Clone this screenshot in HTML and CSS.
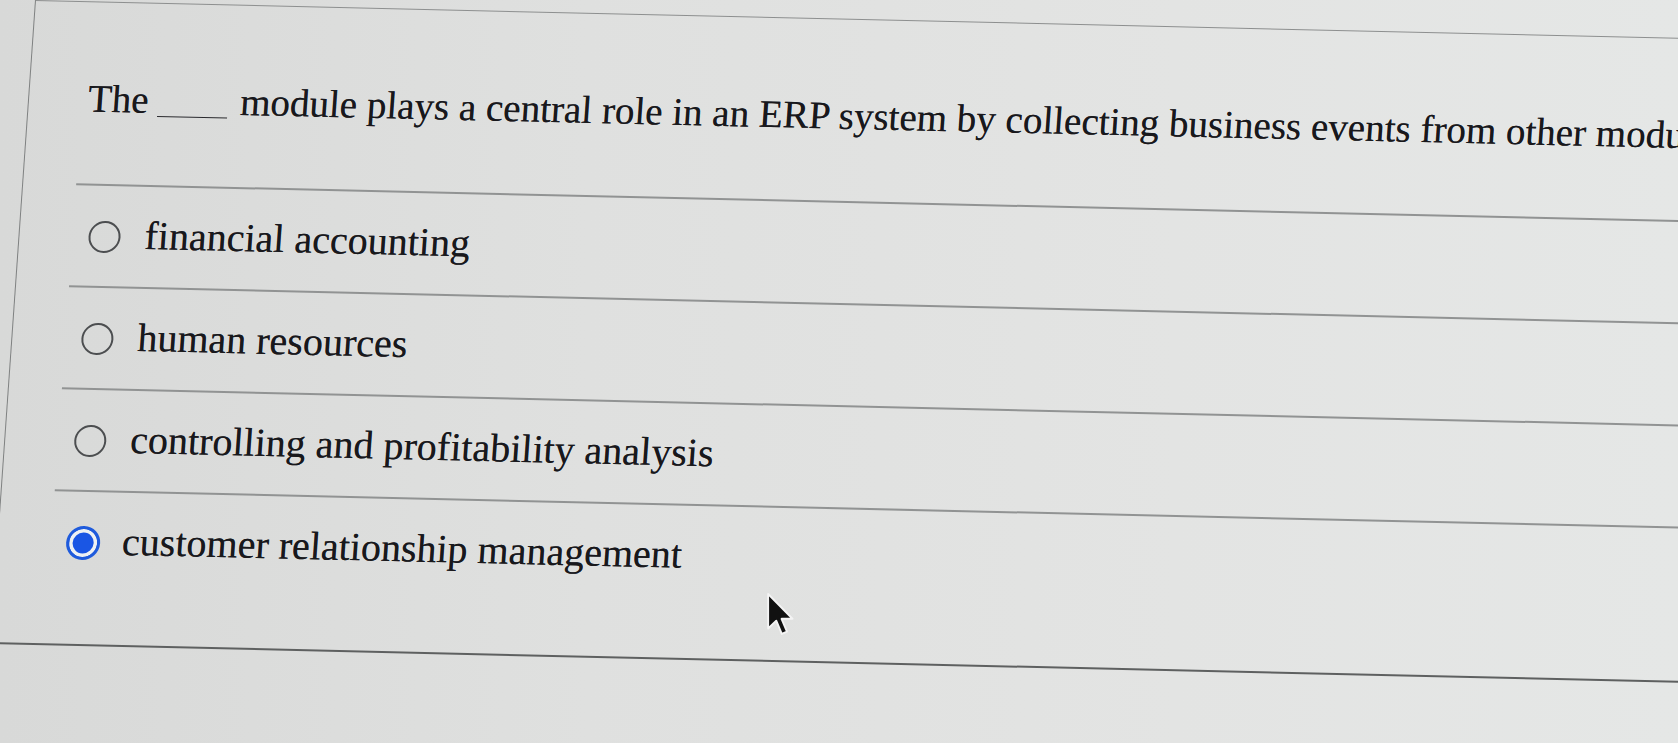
FILE: index.html
```html
<!DOCTYPE html>
<html lang="en">
<head>
<meta charset="utf-8">
<title>ERP quiz question</title>
<link rel="stylesheet" href="styles.css">
</head>
<body>
<div class="frame">
  <div class="question">The <span class="blank"></span> module plays a central role in an ERP system by collecting business events from other modules.</div>
  <ul class="options">
    <li class="option"><span class="radio"></span><span class="label">financial accounting</span></li>
    <li class="option"><span class="radio"></span><span class="label">human resources</span></li>
    <li class="option"><span class="radio"></span><span class="label">controlling and profitability analysis</span></li>
    <li class="option"><span class="radio checked"></span><span class="label">customer relationship management</span></li>
  </ul>
</div>
<svg class="cursor" width="30" height="46" viewBox="0 0 22 34" aria-hidden="true">
  <path d="M1.5 1.5 L1.5 27 L7.5 21.2 L11.6 31 L15.4 29.3 L11.4 19.8 L19.5 19.8 Z" fill="#111" stroke="#f4f4f4" stroke-width="1.4" stroke-linejoin="round"/>
</svg>
</body>
</html>
```
FILE: styles.css
```css
html, body {
  margin: 0;
  height: 100%;
}

body {
  position: relative;
  overflow: hidden;
  background: linear-gradient(90deg, #d8d9d8 0%, #dfe0df 35%, #e3e4e3 70%, #e5e7e6 100%);
  font-family: "Liberation Serif", "Times New Roman", serif;
  color: #18181c;
  text-shadow: 0 0 0.6px rgba(20, 20, 25, 0.7);
}

.frame {
  box-sizing: border-box;
  margin-left: 35px;
  width: 1780px;
  height: 644px;
  padding-top: 72px;
  border-left: 1.5px solid #7f8181;
  border-top: 1.5px solid #8d8f8f;
  border-bottom: 2px solid #5e6060;
  transform-origin: 0 0;
  transform: matrix(1, 0.023, -0.07, 1, 0, 0);
}

.question {
  font-size: 39px;
  line-height: 48px;
  padding-left: 59px;
  white-space: nowrap;
}

.blank {
  display: inline-block;
  width: 70px;
  margin: 0 2px -4px 0;
  border-bottom: 1.5px solid #2a2a2e;
}

.options {
  list-style: none;
  margin: 61px 0 0 53px;
  padding: 0;
}

.option {
  box-sizing: border-box;
  display: flex;
  align-items: flex-start;
  height: 102px;
  padding: 25px 0 0 16px;
  border-top: 2px solid #919393;
  font-size: 40px;
  line-height: 48px;
  white-space: nowrap;
}

.radio {
  flex: none;
  box-sizing: border-box;
  width: 32px;
  height: 32px;
  margin: 10px 24px 0 0;
  border: 2.5px solid #4c4e50;
  border-radius: 50%;
}

.radio.checked {
  width: 34px;
  height: 34px;
  margin: 9px 22px 0 -1px;
  border: 3.5px solid #1f5bdc;
  background: #1a56e4;
  box-shadow: inset 0 0 0 3.5px #eef1f3;
}

.cursor {
  position: absolute;
  left: 766px;
  top: 592px;
}
```
